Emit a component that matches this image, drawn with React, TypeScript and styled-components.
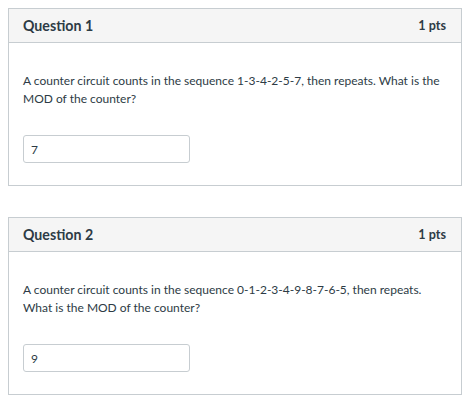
import React from "react";
import styled, { createGlobalStyle } from "styled-components";

const Global = createGlobalStyle`
  html, body { margin: 0; padding: 0; background: #ffffff; }
  body { font-family: Lato, "Noto Sans", sans-serif; color: #2d3b45; }
`;

const Page = styled.div`
  display: flex;
  flex-direction: column;
  gap: 31px;
  padding: 8px 12px 8px 8px;
  width: 454px;
`;

const Card = styled.section`
  border: 1px solid #c7cdd1;
  background: #fff;
`;

const Header = styled.header`
  display: flex;
  justify-content: space-between;
  align-items: center;
  height: 33px;
  padding: 0 15px 0 14px;
  background: #f5f5f5;
  border-bottom: 1px solid #c7cdd1;
  font-weight: 700;
`;

const Title = styled.h2`
  margin: 0;
  font-size: 14.2px;
  font-weight: 700;
`;

const Points = styled.span`
  font-size: 12.6px;
  font-weight: 700;
`;

const Body = styled.div`
  display: flex;
  flex-direction: column;
  gap: 27px;
  padding: 29px 14px 22px 14px;
`;

const Text = styled.p`
  margin: 0;
  font-size: 12px;
  line-height: 18px;
`;

const Answer = styled.div`
  width: 167px;
  height: 28px;
  box-sizing: border-box;
  border: 1px solid #c7cdd1;
  border-radius: 3px;
  display: flex;
  align-items: center;
  padding-left: 7px;
  font-size: 12px;
`;

const questions = [
  {
    title: "Question 1",
    pts: "1 pts",
    text: "A counter circuit counts in the sequence 1-3-4-2-5-7, then repeats. What is the MOD of the counter?",
    answer: "7",
  },
  {
    title: "Question 2",
    pts: "1 pts",
    text: "A counter circuit counts in the sequence 0-1-2-3-4-9-8-7-6-5, then repeats. What is the MOD of the counter?",
    answer: "9",
  },
];

export default function App() {
  return (
    <>
      <Global />
      <Page>
        {questions.map((q) => (
          <Card key={q.title}>
            <Header>
              <Title>{q.title}</Title>
              <Points>{q.pts}</Points>
            </Header>
            <Body>
              <Text>{q.text}</Text>
              <Answer>{q.answer}</Answer>
            </Body>
          </Card>
        ))}
      </Page>
    </>
  );
}
